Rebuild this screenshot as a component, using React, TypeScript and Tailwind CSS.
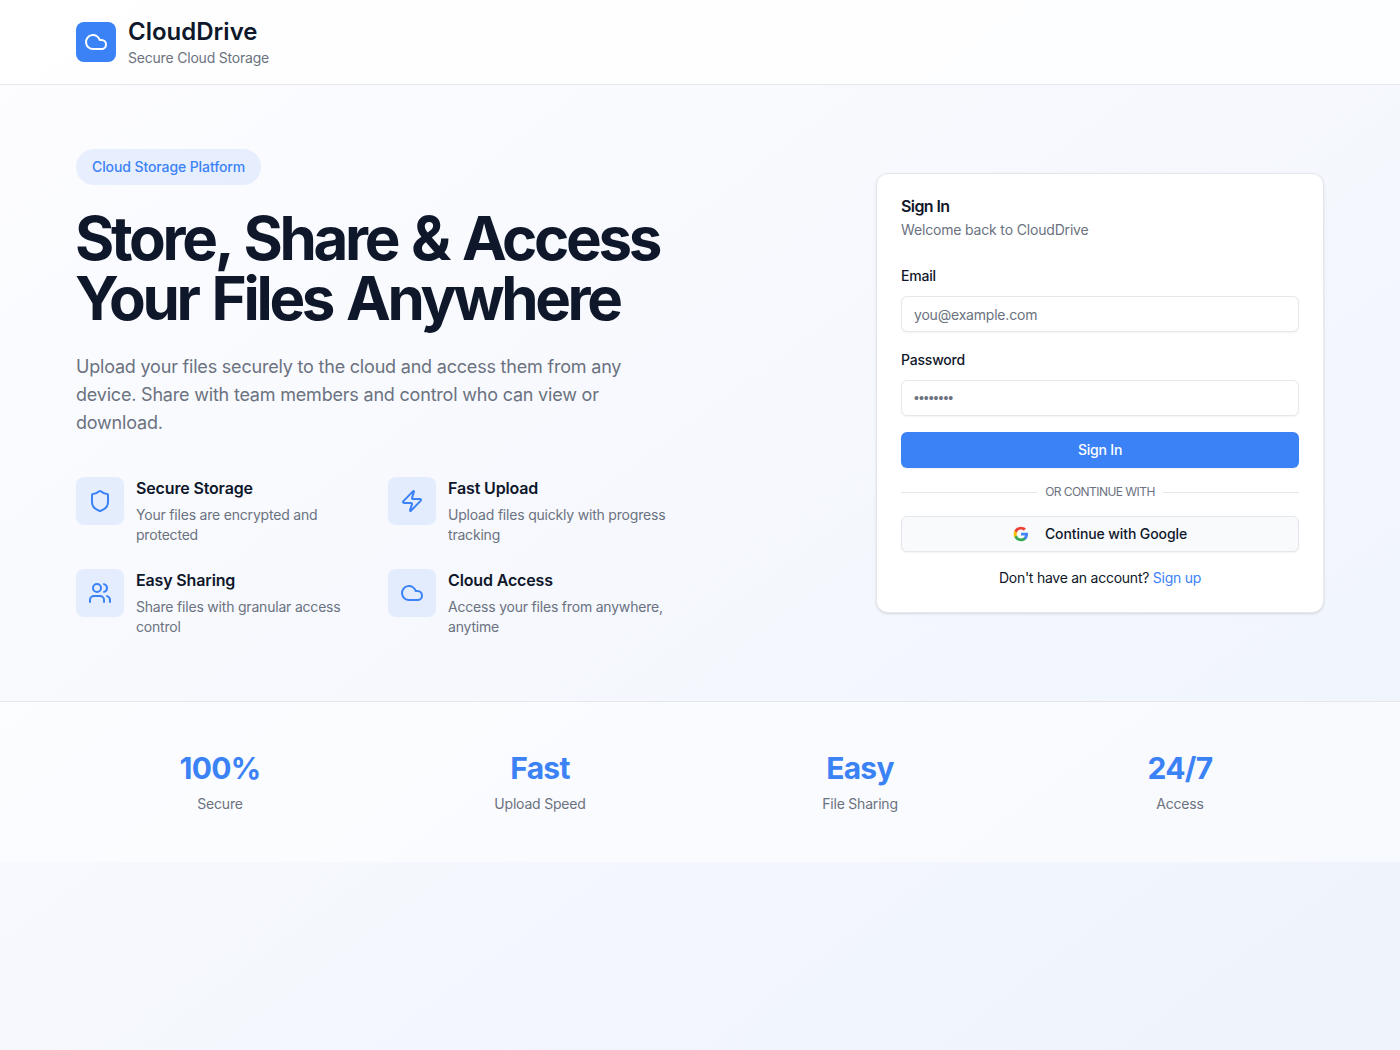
import { Cloud, Shield, Users, Zap } from "lucide-react"

const features = [
  { icon: Shield, title: "Secure Storage", text: "Your files are encrypted and protected" },
  { icon: Zap, title: "Fast Upload", text: "Upload files quickly with progress tracking" },
  { icon: Users, title: "Easy Sharing", text: "Share files with granular access control" },
  { icon: Cloud, title: "Cloud Access", text: "Access your files from anywhere, anytime" },
]

const stats = [
  { value: "100%", label: "Secure" },
  { value: "Fast", label: "Upload Speed" },
  { value: "Easy", label: "File Sharing" },
  { value: "24/7", label: "Access" },
]

function GoogleIcon() {
  return (
    <svg viewBox="0 0 24 24" className="h-4 w-4">
      <path fill="#4285F4" d="M22.56 12.25c0-.78-.07-1.53-.2-2.25H12v4.26h5.92c-.26 1.37-1.04 2.53-2.21 3.31v2.77h3.57c2.08-1.92 3.28-4.74 3.28-8.09z" />
      <path fill="#34A853" d="M12 23c2.97 0 5.46-.98 7.28-2.66l-3.57-2.77c-.98.66-2.23 1.06-3.71 1.06-2.86 0-5.29-1.93-6.16-4.53H2.18v2.84C3.99 20.53 7.7 23 12 23z" />
      <path fill="#FBBC05" d="M5.84 14.09c-.22-.66-.35-1.36-.35-2.09s.13-1.43.35-2.09V7.07H2.18C1.43 8.55 1 10.22 1 12s.43 3.45 1.18 4.93l2.85-2.22.81-.62z" />
      <path fill="#EA4335" d="M12 5.38c1.62 0 3.06.56 4.21 1.64l3.15-3.15C17.45 2.09 14.97 1 12 1 7.7 1 3.99 3.47 2.18 7.07l3.66 2.84c.87-2.6 3.3-4.53 6.16-4.53z" />
    </svg>
  )
}

export default function App() {
  return (
    <div className="min-h-[1050px] bg-gradient-to-br from-[#fdfdff] to-[#eef3fc] font-['Inter','Liberation_Sans',sans-serif] text-[#0f172a]">
      <header className="h-[85px] border-b border-[#e4e7ec] bg-white/80 px-[76px]">
        <div className="flex h-full items-center gap-3">
          <div className="flex h-10 w-10 items-center justify-center rounded-lg bg-[#3b82f6]">
            <Cloud className="h-6 w-6 text-white" strokeWidth={2} />
          </div>
          <div>
            <h1 className="text-2xl leading-8 font-semibold">CloudDrive</h1>
            <p className="text-sm leading-5 tracking-[-0.2px] text-[#6b7280]">Secure Cloud Storage</p>
          </div>
        </div>
      </header>

      <main className="flex items-center justify-between px-[76px] py-16">
        <section className="w-[600px]">
          <span className="inline-block rounded-full bg-[#3b82f6]/10 px-4 py-2 text-sm leading-5 font-[450] tracking-[-0.1px] text-[#3b82f6]">
            Cloud Storage Platform
          </span>
          <h2 className="mt-[23px] -ml-px text-6xl leading-[60px] font-[650] tracking-[-3.3px] [word-spacing:3px]">
            Store, Share &amp; Access
            <br />
            Your Files Anywhere
          </h2>
          <p className="mt-[25px] text-lg leading-7 tracking-[-0.2px] text-[#6b7280]">
            Upload your files securely to the cloud and access them from any device. Share with team members and control
            who can view or download.
          </p>
          <div className="mt-10 grid grid-cols-2 gap-6">
            {features.map((f) => (
              <div key={f.title} className="flex gap-3">
                <div className="flex h-12 w-12 shrink-0 items-center justify-center rounded-lg bg-[#3b82f6]/10">
                  <f.icon className="h-6 w-6 text-[#3b82f6]" strokeWidth={2} />
                </div>
                <div>
                  <h3 className="leading-[22px] font-semibold tracking-[-0.15px]">{f.title}</h3>
                  <p className="mt-1.5 text-sm leading-5 tracking-[-0.2px] text-[#6b7280]">{f.text}</p>
                </div>
              </div>
            ))}
          </div>
        </section>

        <section className="w-[448px] rounded-xl border border-[#e4e7ec] bg-white p-6 shadow-sm">
          <h3 className="leading-4 font-semibold tracking-[-0.6px]">Sign In</h3>
          <p className="mt-1.5 text-sm leading-5 tracking-[-0.17px] text-[#6b7280]">Welcome back to CloudDrive</p>
          <form className="mt-[26px]">
            <label className="block text-sm leading-5 font-[450] tracking-[-0.2px]">Email</label>
            <input
              className="mt-2.5 block h-9 w-full rounded-md border border-[#e4e7ec] bg-white px-3 text-sm tracking-[-0.2px] shadow-xs placeholder:text-[#6b7280]"
              placeholder="you@example.com"
            />
            <label className="mt-[18px] block text-sm leading-5 font-[450] tracking-[-0.2px]">Password</label>
            <input
              type="password"
              defaultValue="password"
              className="mt-2.5 block h-9 w-full rounded-md border border-[#e4e7ec] bg-white px-3 font-['Liberation_Sans',sans-serif] text-sm text-[#6b7280] shadow-xs"
            />
            <button className="mt-4 block h-9 w-full rounded-md bg-[#3b82f6] text-sm font-[450] tracking-[-0.2px] text-white shadow-xs">
              Sign In
            </button>
          </form>
          <div className="mt-4 flex h-4 items-center gap-2">
            <div className="h-px flex-1 bg-[#e4e7ec]" />
            <span className="text-xs tracking-[-0.55px] text-[#6b7280]">OR CONTINUE WITH</span>
            <div className="h-px flex-1 bg-[#e4e7ec]" />
          </div>
          <button className="mt-4 flex h-9 w-full items-center justify-center gap-4 rounded-md border border-[#e4e7ec] bg-[#f8fafc] text-sm font-[450] tracking-[-0.1px] shadow-xs">
            <GoogleIcon />
            Continue with Google
          </button>
          <p className="mt-4 text-center text-sm leading-5 tracking-[-0.25px]">
            Don&apos;t have an account? <span className="text-[#3b82f6]">Sign up</span>
          </p>
        </section>
      </main>

      <section className="border-t border-[#e4e7ec] bg-white/50 px-[76px] py-12">
        <div className="grid grid-cols-4 gap-8">
          {stats.map((s) => (
            <div key={s.label} className="text-center">
              <div className="text-3xl leading-9 font-[650] tracking-[-0.75px] text-[#3b82f6]">{s.value}</div>
              <div className="mt-2 text-sm leading-5 tracking-[-0.2px] text-[#6b7280]">{s.label}</div>
            </div>
          ))}
        </div>
      </section>
    </div>
  )
}
